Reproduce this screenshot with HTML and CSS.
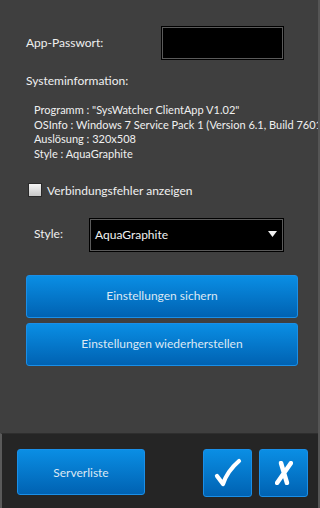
FILE: index.html
```html
<!DOCTYPE html>
<html lang="de">
<head>
<meta charset="utf-8">
<title>Einstellungen</title>
<link rel="stylesheet" href="styles.css">
</head>
<body>
<div class="window">
  <main class="content">
    <div class="row pw-row">
      <span class="label">App-Passwort:</span>
      <div class="pw-box"></div>
    </div>
    <div class="section-title">Systeminformation:</div>
    <div class="info">
      <div>Programm : "SysWatcher ClientApp V1.02"</div>
      <div>OSInfo : Windows 7 Service Pack 1 (Version 6.1, Build 7601, Service Pack 1)</div>
      <div>Auslösung : 320x508</div>
      <div>Style : AquaGraphite</div>
    </div>
    <label class="check-row">
      <span class="checkbox"></span>
      <span>Verbindungsfehler anzeigen</span>
    </label>
    <div class="row style-row">
      <span class="style-label">Style:</span>
      <div class="select">
        <span>AquaGraphite</span>
        <svg class="arrow" width="9" height="6" viewBox="0 0 9 6"><path d="M0 0H9L4.5 6Z" fill="#f0f0f0"/></svg>
      </div>
    </div>
    <div class="buttons">
      <div class="btn wide">Einstellungen sichern</div>
      <div class="btn wide">Einstellungen wiederherstellen</div>
    </div>
  </main>
  <footer class="bottom">
    <div class="btn server">Serverliste</div>
    <div class="spacer"></div>
    <div class="btn icon-btn">
      <svg width="34" height="32" viewBox="0 0 34 32"><defs><filter id="g"><feGaussianBlur stdDeviation="0.5"/></filter></defs><path d="M6 19 L12 27 C15 18 21 10 28 4" fill="none" stroke="#ffffff" stroke-width="4.2" stroke-linecap="round" stroke-linejoin="round" filter="url(#g)"/></svg>
    </div>
    <div class="btn icon-btn">
      <svg width="30" height="32" viewBox="0 0 30 32"><defs><filter id="g2"><feGaussianBlur stdDeviation="0.5"/></filter></defs><path d="M12 6 L18 26 M22 6 L8 26" fill="none" stroke="#ffffff" stroke-width="4.5" stroke-linecap="round" filter="url(#g2)"/></svg>
    </div>
  </footer>
</div>
</body>
</html>
```
FILE: styles.css
```css
* { box-sizing: border-box; }
html, body { margin: 0; padding: 0; }
body {
  width: 320px;
  height: 508px;
  overflow: hidden;
  background: #3f3f3f;
  font-family: Lato, "Noto Sans", sans-serif;
  color: #f0f0f0;
}
.window {
  width: 320px;
  height: 508px;
  display: flex;
  flex-direction: column;
  border-right: 2px solid #555555;
}
.content {
  height: 433px;
  padding: 27px 0 0 26px;
  display: flex;
  flex-direction: column;
}
.row { display: flex; align-items: center; }
.label { font-size: 12px; width: 136px; padding-bottom: 2px; }
.pw-box {
  width: 121px;
  height: 32px;
  background: #000;
  border: 1px solid #5a5a5a;
  box-shadow: 0 0 0 1px #000;
}
.section-title {
  font-size: 12px;
  margin-top: 13px;
  line-height: 18px;
}
.info {
  margin-top: 13px;
  padding-left: 8px;
  font-size: 11px;
  line-height: 14.7px;
  white-space: nowrap;
  overflow: hidden;
}
.check-row {
  display: flex;
  align-items: center;
  gap: 5px;
  margin-top: 21px;
  padding-left: 2px;
  font-size: 12px;
}
.checkbox {
  width: 14px;
  height: 14px;
  border: 1px solid #2a2a2a;
  background: linear-gradient(#f4f4f4, #c8c8c8);
}
.style-row { margin-top: 21px; }
.style-label { font-size: 12px; width: 64px; padding-left: 8px; padding-bottom: 2px; }
.select {
  width: 193px;
  height: 32px;
  background: #000;
  border: 1px solid #5a5a5a;
  box-shadow: 0 0 0 1px #000;
  display: flex;
  align-items: center;
  justify-content: space-between;
  padding: 0 5px 0 4px;
  font-size: 12px;
}
.arrow { margin-top: -2px; }
.buttons {
  margin-top: 24px;
  display: flex;
  flex-direction: column;
  gap: 5px;
}
.btn {
  display: flex;
  align-items: center;
  justify-content: center;
  background: linear-gradient(#0a8ee4, #0062b2);
  border: 1px solid #1a8fe8;
  border-radius: 3px;
  color: #dce8f4;
  font-size: 12px;
}
.wide { width: 272px; height: 43px; padding-bottom: 2px; }
.bottom {
  height: 75px;
  background: #252525;
  border-top: 1px solid #2e2e2e;
  border-left: 2px solid #5a5a5a;
  display: flex;
  align-items: flex-start;
  padding: 15px 10px 0 15px;
  gap: 7px;
}
.server { width: 128px; height: 46px; }
.spacer { flex: 1; }
.icon-btn { width: 49px; height: 48px; }
```
